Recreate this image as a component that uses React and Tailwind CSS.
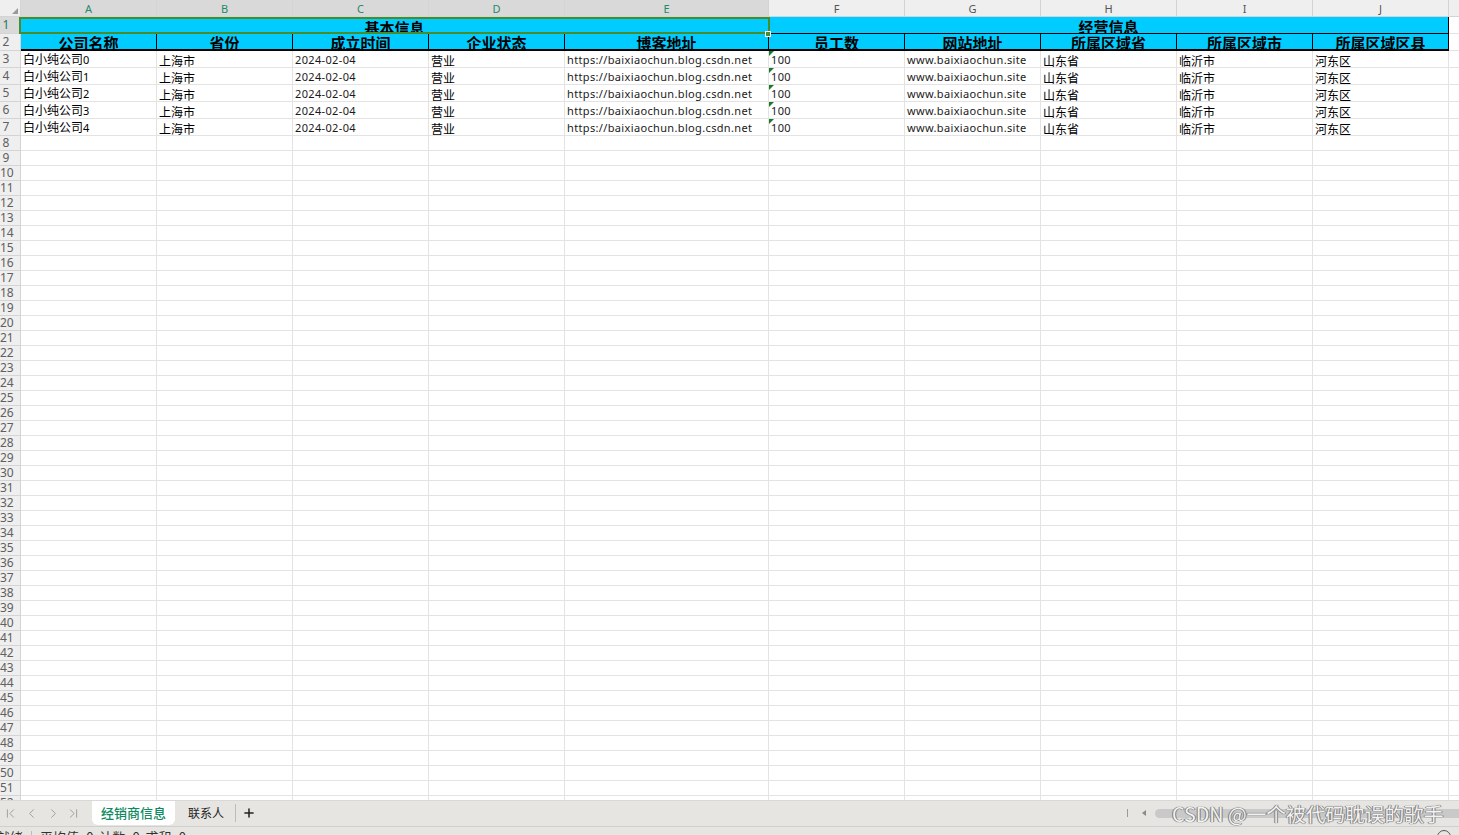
import React from 'react';
import { ChevronFirst, ChevronLeft, ChevronRight, ChevronLast, Plus } from 'lucide-react';

const COLS = [
  { key: 'A', w: 'w-[136px]' },
  { key: 'B', w: 'w-[136px]' },
  { key: 'C', w: 'w-[136px]' },
  { key: 'D', w: 'w-[136px]' },
  { key: 'E', w: 'w-[204px]' },
  { key: 'F', w: 'w-[136px]' },
  { key: 'G', w: 'w-[136px]' },
  { key: 'H', w: 'w-[136px]' },
  { key: 'I', w: 'w-[136px]' },
  { key: 'J', w: 'w-[136px]' },
];

const HEADERS = ['公司名称', '省份', '成立时间', '企业状态', '博客地址', '员工数', '网站地址', '所属区域省', '所属区域市', '所属区域区县'];

const rows = [0, 1, 2, 3, 4].map((i) => [
  `白小纯公司${i}`,
  '上海市',
  '2024-02-04',
  '营业',
  'https://baixiaochun.blog.csdn.net',
  '100',
  'www.baixiaochun.site',
  '山东省',
  '临沂市',
  '河东区',
]);

const latin = new Set([2, 4, 5, 6]);

const cjk = { fontFamily: '"Noto Sans CJK SC", "Noto Sans", sans-serif' };
const sans = { fontFamily: '"Noto Sans", "Noto Sans CJK SC", sans-serif' };

const RowNum = ({ n, h, active }) => (
  <div
    className={`${h} w-[21px] shrink-0 flex items-center border-r border-b border-[#d4d4d4] ${active ? 'bg-[#d9d9d9] text-[#1f7a57]' : 'bg-[#efefef] text-[#606060]'}`}
  >
    <span className="w-[12px] text-center text-[12px] leading-none" style={sans}>{n}</span>
  </div>
);

const EmptyRow = ({ n }) => (
  <div className="flex h-[15px]">
    <RowNum n={n} h="h-[15px]" />
    {COLS.map((c) => (
      <div key={c.key} className={`${c.w} shrink-0 border-r border-b border-[#e3e3e3]`} />
    ))}
    <div className="flex-1 border-b border-[#e3e3e3]" />
  </div>
);

export default function App() {
  const empty = [];
  for (let n = 8; n <= 52; n++) empty.push(n);

  return (
    <div className="w-[1459px] h-[835px] flex flex-col bg-white overflow-hidden select-none">
      {/* column letters */}
      <div className="flex h-[17px] shrink-0">
        <div className="w-[21px] shrink-0 bg-[#efefef] border-r border-b border-[#d4d4d4] flex items-end justify-end p-[2px]">
          <div className="w-0 h-0 border-l-[6px] border-l-transparent border-b-[6px] border-b-[#9a9a9a]" />
        </div>
        {COLS.map((c, i) => (
          <div
            key={c.key}
            className={`${c.w} shrink-0 flex items-center justify-center pt-[3px] text-[11px] border-r border-b border-[#d4d4d4] ${i < 5 ? 'bg-[#d9d9d9] text-[#1f8a6a]' : 'bg-[#efefef] text-[#555]'}`}
            style={sans}
          >
            {c.key}
          </div>
        ))}
        <div className="flex-1 bg-[#efefef] border-b border-[#d4d4d4]" />
      </div>

      {/* sheet */}
      <div className="flex-1 overflow-hidden relative">
        {/* row 1 */}
        <div className="flex h-[17px]">
          <RowNum n={1} h="h-[17px]" active />
          <div className="w-[748px] shrink-0 bg-[#00ccff] flex items-end justify-center overflow-hidden border-r border-[#000]">
            <span className="text-[15px] font-bold leading-[16px] translate-y-[2px] text-black" style={cjk}>基本信息</span>
          </div>
          <div className="w-[680px] shrink-0 bg-[#00ccff] flex items-end justify-center overflow-hidden border-r border-b border-[#000]">
            <span className="text-[15px] font-bold leading-[16px] translate-y-[2px] text-black" style={cjk}>经营信息</span>
          </div>
          <div className="flex-1 border-b border-[#e3e3e3]" />
        </div>

        {/* row 2 */}
        <div className="flex h-[17px]">
          <RowNum n={2} h="h-[17px]" />
          {COLS.map((c, i) => (
            <div
              key={c.key}
              className={`${c.w} shrink-0 bg-[#00ccff] flex items-end justify-center overflow-hidden border-r border-b-2 border-[#000]`}
            >
              <span className="text-[15px] font-bold leading-[16px] translate-y-[2px] text-black" style={cjk}>{HEADERS[i]}</span>
            </div>
          ))}
          <div className="flex-1 border-b border-[#e3e3e3]" />
        </div>

        {/* data rows */}
        {rows.map((r, ri) => (
          <div key={ri} className="flex h-[17px]">
            <RowNum n={ri + 3} h="h-[17px]" />
            {COLS.map((c, i) => (
              <div
                key={c.key}
                className={`${c.w} shrink-0 relative flex items-end pl-[2px] overflow-hidden border-r border-b border-[#e3e3e3] text-black`}
              >
                {i === 5 && (
                  <div className="absolute top-0 left-0 w-0 h-0 border-t-[5px] border-t-[#1b7a2a] border-r-[5px] border-r-transparent" />
                )}
                {latin.has(i) ? (
                  <span className="text-[11px] leading-[15px] tracking-[0.35px] text-[#1a1a1a]" style={sans}>{r[i]}</span>
                ) : i === 0 ? (
                  <span className="text-[12px] leading-[15px]" style={cjk}>
                    {r[i].slice(0, 5)}
                    <span className="text-[11px]" style={sans}>{r[i].slice(5)}</span>
                  </span>
                ) : (
                  <span className="text-[12px] leading-[14px] translate-y-[1px]" style={cjk}>{r[i]}</span>
                )}
              </div>
            ))}
            <div className="flex-1 border-b border-[#e3e3e3]" />
          </div>
        ))}

        {empty.map((n) => (
          <EmptyRow key={n} n={n} />
        ))}

        {/* selection outline A1:E1 */}
        <div className="absolute left-[19px] top-0 w-[751px] h-[17px] border-2 border-[#4a8c2a] pointer-events-none" />
        <div className="absolute left-[765px] top-[14px] w-[6px] h-[6px] bg-[#4a8c2a] border border-white pointer-events-none" />
      </div>

      {/* sheet tabs */}
      <div className="h-[26px] shrink-0 bg-[#e6e5e1] flex items-start relative border-t border-[#d8d8d8]">
        <div className="w-[92px] flex items-center h-[24px] text-[#a0a0a0]">
          <ChevronFirst size={15} strokeWidth={1.6} className="ml-[3px]" />
          <ChevronLeft size={15} strokeWidth={1.6} className="ml-[6px]" />
          <ChevronRight size={15} strokeWidth={1.6} className="ml-[7px]" />
          <ChevronLast size={15} strokeWidth={1.6} className="ml-[5px]" />
        </div>
        <div className="w-[83px] h-[24px] bg-white rounded-b-[6px] flex items-center justify-center text-[13px] text-[#0e8a5f] font-medium" style={cjk}>
          经销商信息
        </div>
        <div className="h-[24px] flex items-center pl-[13px] pr-[11px] text-[12px] text-[#222]" style={cjk}>联系人</div>
        <div className="w-px h-[18px] mt-[3px] bg-[#bdbdbd]" />
        <div className="h-[24px] flex items-center pl-[6px] text-[#222]">
          <Plus size={14} strokeWidth={2.6} />
        </div>

        <div className="ml-auto h-[24px] flex items-center">
          <div className="w-px h-[8px] bg-[#9a9a9a]" />
          <div className="ml-[14px] w-0 h-0 border-y-[3px] border-y-transparent border-r-[4px] border-r-[#8a8a8a]" />
          <div className="ml-[9px] w-[304px] h-[9px] rounded-l-full bg-[#c9c9c9]" />
        </div>

        <div
          className="absolute left-[1172px] top-[1px] text-[19.7px] leading-[24px] text-[#f2f2f2] pointer-events-none"
          style={{ ...cjk, textShadow: '0 0 1px #777, 0 0 1px #777, 1px 0 0 #888, -1px 0 0 #888' }}
        >
          CSDN @一个被代码耽误的歌手
        </div>
      </div>

      {/* status bar */}
      <div className="h-[9px] shrink-0 bg-[#e6e5e1] border-t border-[#cfcfcf] overflow-hidden relative">
        <div className="absolute top-[3px] left-[-3px] flex items-center text-[13px] leading-[14px] text-[#333]" style={cjk}>
          <span>就绪</span>
          <span className="w-px h-[12px] bg-[#bbb] mx-[8px]" />
          <span>平均值=0&nbsp;&nbsp;计数=0&nbsp;&nbsp;求和=0</span>
        </div>
        <div className="absolute top-[3px] left-[1437px] w-[14px] h-[14px] rounded-full border border-[#555]" />
      </div>
    </div>
  );
}
